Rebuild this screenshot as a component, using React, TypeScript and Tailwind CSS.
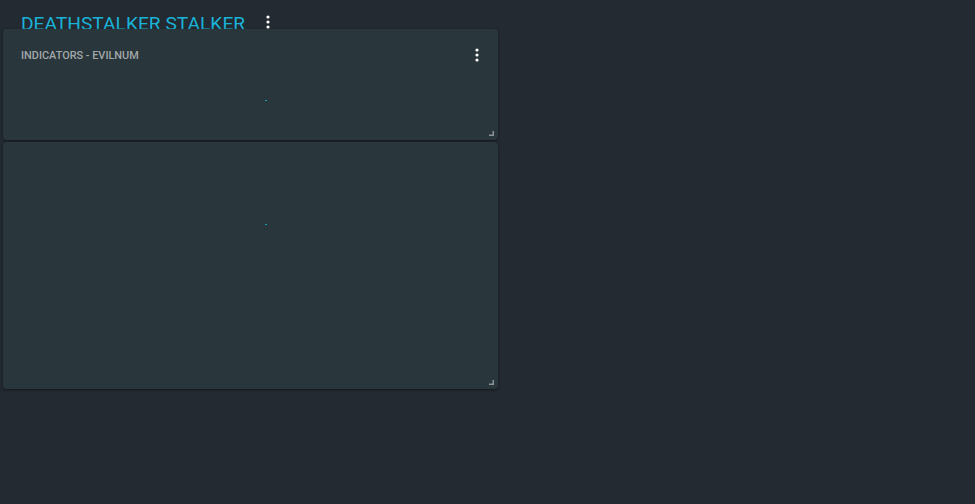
import React from "react";

function Kebab({ className = "" }: { className?: string }) {
  return (
    <svg width="4" height="14" viewBox="0 0 4 14" className={className}>
      <circle cx="2" cy="2" r="1.6" fill="#ffffff" />
      <circle cx="2" cy="7" r="1.6" fill="#ffffff" />
      <circle cx="2" cy="12" r="1.6" fill="#ffffff" />
    </svg>
  );
}

function Resize() {
  return (
    <svg width="6" height="6" viewBox="0 0 6 6" className="absolute right-[3px] bottom-[3px]">
      <path d="M5 0 V5 H0 V3.5 H3.5 V0 Z" fill="#8a9296" />
    </svg>
  );
}

export default function App() {
  return (
    <div
      className="w-[975px] h-[504px] bg-[#232a31] overflow-hidden"
      style={{ fontFamily: "Roboto, 'Liberation Sans', sans-serif" }}
    >
      <div className="flex items-center h-[44px] pl-[21px] pt-[4px]">
        <span className="text-[19.2px] leading-none text-[#1ab3d8]">DEATHSTALKER STALKER</span>
        <Kebab className="ml-[21px] mt-[-5px]" />
      </div>
      <div className="relative mt-[-15px] ml-[3px] w-[495px] flex flex-col gap-[2px]">
        <div className="relative h-[111px] bg-[#29363b] rounded-[4px] shadow-[0_1px_3px_rgba(0,0,0,0.45)]">
          <div className="flex items-center justify-between pl-[18px] pr-[19px] pt-[19px]">
            <span className="text-[10.9px] font-medium text-[#a2a8aa]">INDICATORS - EVILNUM</span>
            <Kebab className="mt-[-2px]" />
          </div>
          <div className="absolute left-[262px] top-[71px] w-[2px] h-[1px] bg-[#1a9aa8]" />
          <Resize />
        </div>
        <div className="relative h-[247px] bg-[#29363b] rounded-[4px] shadow-[0_1px_3px_rgba(0,0,0,0.45)]">
          <div className="absolute left-[262px] top-[82px] w-[2px] h-[1px] bg-[#1a9aa8]" />
          <Resize />
        </div>
      </div>
    </div>
  );
}
